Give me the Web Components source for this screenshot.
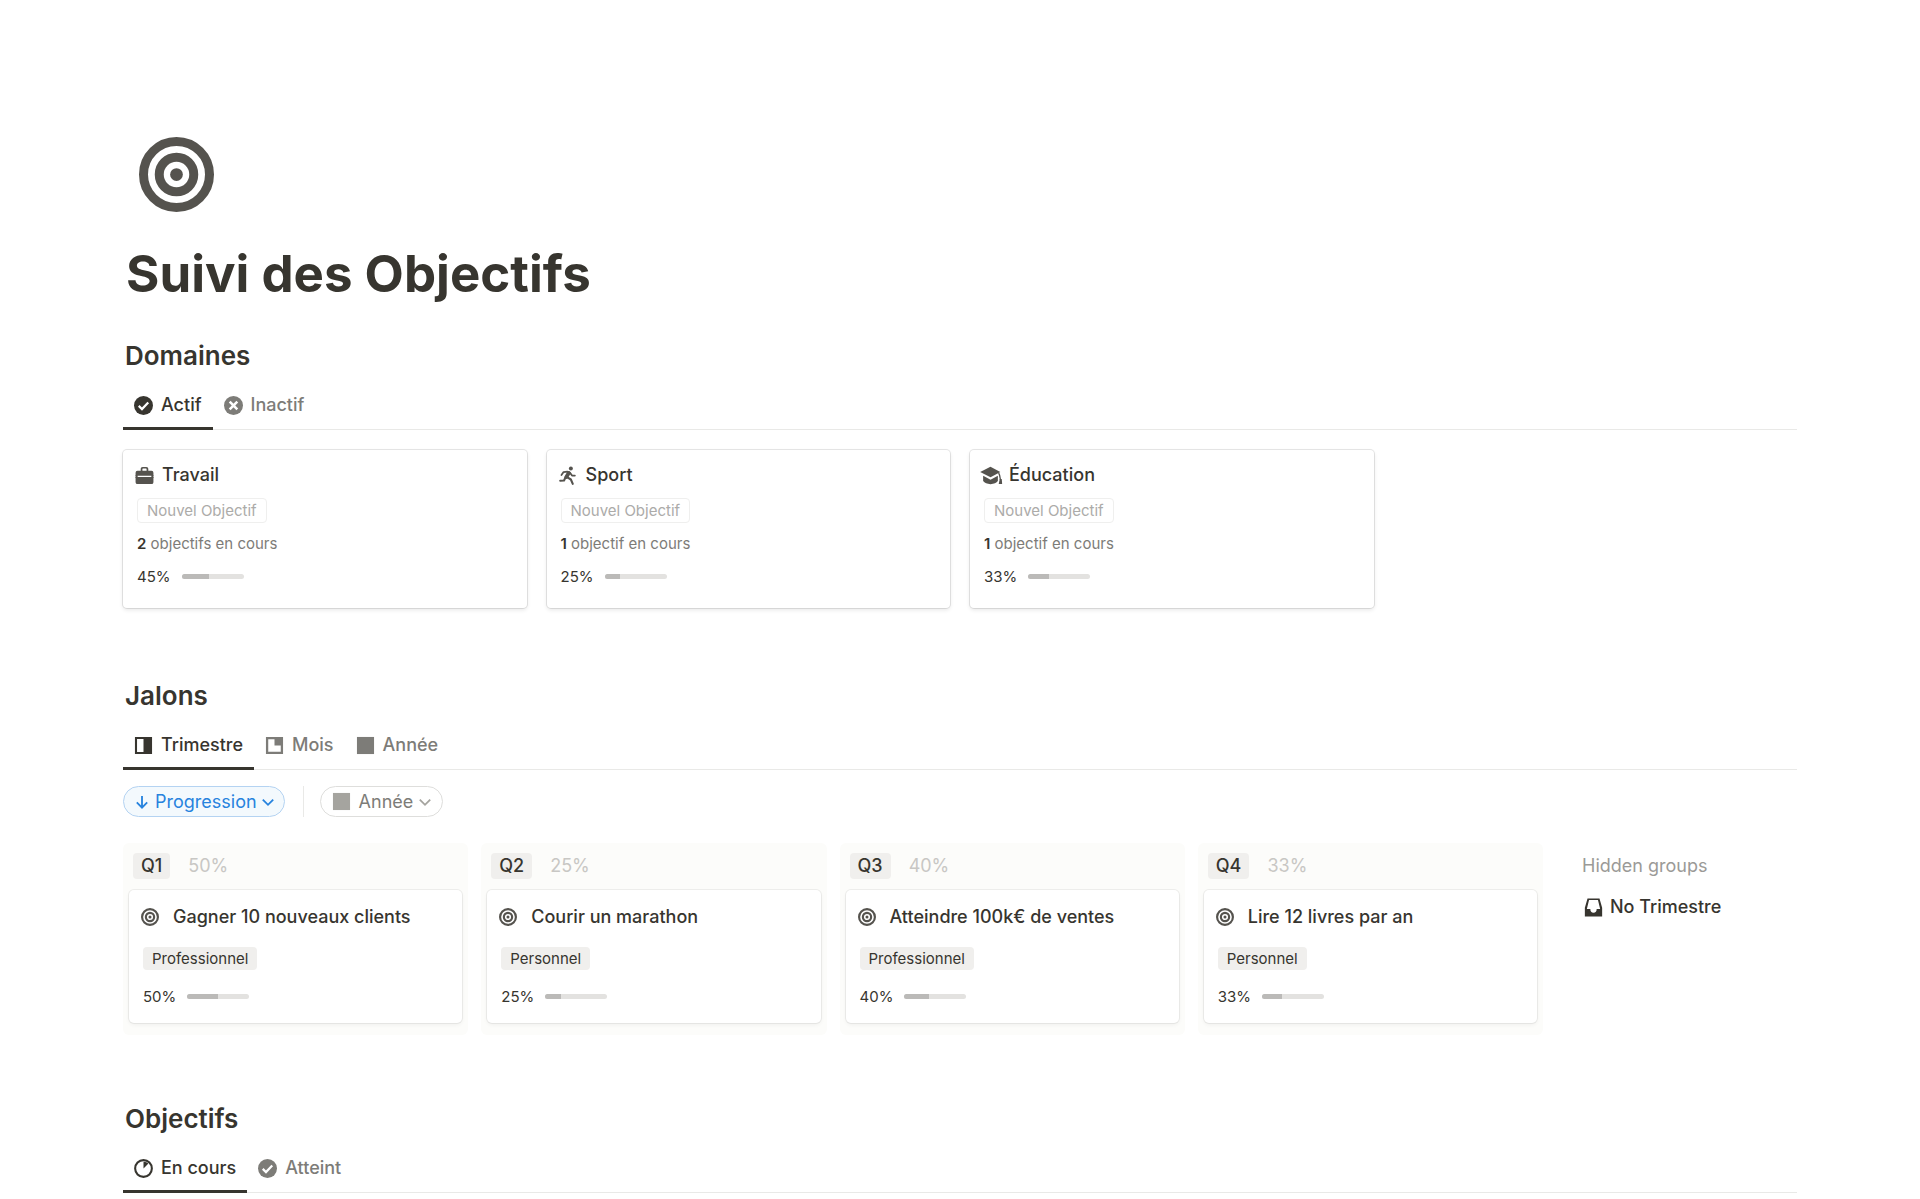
<!DOCTYPE html>
<html lang="fr">
<head>
<meta charset="utf-8">
<meta name="viewport" content="width=device-width, initial-scale=1">
<title>Suivi des Objectifs</title>
<style>
  :root {
    --color-text: #37352f;
    --color-muted: #7d7c78;
    --color-faint: #acaba9;
    --color-icon: #55534e;
    --color-line: #e9e9e7;
    --color-tag: #f0efed;
    --color-accent: #2783de;
    --font-size-body: 18px;
    --font-size-small: 15px;
    --line-body: 26px;
    --line-small: 23px;
  }

  body {
    margin: 0;
    background: #fff;
    color: var(--color-text);
    font-family: Inter, "Liberation Sans", sans-serif;
    font-size: var(--font-size-body);
    line-height: var(--line-body);
  }
</style>
</head>
<body>
<goal-page heading="Suivi des Objectifs">
  <page-section heading="Domaines">
    <view-tabs slot="tabs">
      <view-tab icon="check" selected>Actif</view-tab>
      <view-tab icon="cross">Inactif</view-tab>
    </view-tabs>
    <card-gallery>
      <domain-card icon="briefcase" name="Travail" count="2" value="45">objectifs en cours</domain-card>
      <domain-card icon="runner" name="Sport" count="1" value="25">objectif en cours</domain-card>
      <domain-card icon="cap" name="Éducation" count="1" value="33">objectif en cours</domain-card>
    </card-gallery>
  </page-section>

  <page-section heading="Jalons">
    <view-tabs slot="tabs">
      <view-tab icon="half" selected>Trimestre</view-tab>
      <view-tab icon="quarter">Mois</view-tab>
      <view-tab icon="square">Année</view-tab>
    </view-tabs>
    <filter-bar>
      <filter-pill icon="arrow" active>Progression</filter-pill>
      <filter-pill icon="square" slot="filters">Année</filter-pill>
    </filter-bar>
    <goal-board>
      <board-column name="Q1" total="50%">
        <milestone-card tag="Professionnel" value="50">Gagner 10 nouveaux clients</milestone-card>
      </board-column>
      <board-column name="Q2" total="25%">
        <milestone-card tag="Personnel" value="25">Courir un marathon</milestone-card>
      </board-column>
      <board-column name="Q3" total="40%">
        <milestone-card tag="Professionnel" value="40">Atteindre 100k€ de ventes</milestone-card>
      </board-column>
      <board-column name="Q4" total="33%">
        <milestone-card tag="Personnel" value="33">Lire 12 livres par an</milestone-card>
      </board-column>
      <hidden-groups slot="hidden" heading="Hidden groups">No Trimestre</hidden-groups>
    </goal-board>
  </page-section>

  <page-section heading="Objectifs">
    <view-tabs slot="tabs">
      <view-tab icon="clock" selected>En cours</view-tab>
      <view-tab icon="check">Atteint</view-tab>
    </view-tabs>
  </page-section>
</goal-page>

<script>
const esc = (s) => { const d = document.createElement('div'); d.textContent = s; return d.innerHTML; };

// All icons share a 20 x 20 grid.
const ICONS = {
  target: `<g fill="none" stroke="currentColor" stroke-width="2.4"><circle cx="10" cy="10" r="8.8"/><circle cx="10" cy="10" r="4.6"/></g><circle cx="10" cy="10" r="1.7" fill="currentColor"/>`,
  check: `<circle cx="10" cy="10" r="10" fill="currentColor"/><path d="M5 10.4l3.4 3.4 6.6-7" fill="none" stroke="#fff" stroke-width="2.3"/>`,
  cross: `<circle cx="10" cy="10" r="10" fill="currentColor"/><path d="M6 6l8 8M14 6l-8 8" fill="none" stroke="#fff" stroke-width="2.7"/>`,
  briefcase: `<path d="M6 5V3.2C6 1.9 6.8 1 8.1 1h3.8C13.2 1 14 1.9 14 3.2V5h3.4a2 2 0 0 1 2 2v3.3H.6V7a2 2 0 0 1 2-2zm1.8 0h4.4V3.3a.6.6 0 0 0-.6-.6H8.4a.6.6 0 0 0-.6.6zM.6 11.6h18.8V17a2 2 0 0 1-2 2H2.6a2 2 0 0 1-2-2z" fill="currentColor" fill-rule="evenodd"/><path d="M.6 9.5h2.2v3H.6zM17.2 9.5h2.2v3h-2.2z" fill="currentColor"/>`,
  runner: `<circle cx="12.5" cy="2.6" r="2.1" fill="currentColor"/><g fill="none" stroke="currentColor" stroke-linecap="round" stroke-linejoin="round"><path d="M2.6 9.4l2.2-3 3.8-.5 3 1.2 2.1 3h3" stroke-width="1.9"/><path d="M10.3 7.3L7.7 11.5" stroke-width="4"/><path d="M8.5 11.8l4 2.4 2 4.6M7 11.6l-1.7 3.7-4 .2" stroke-width="2.2"/></g>`,
  cap: `<path d="M-1.9 6.2L8.9.8l10.4 5.4-10.3 5.6z" fill="currentColor"/><path d="M1.2 10.2l7.8 4.2 7.7-4.2v5.7c-1.4 2-4.1 3.2-7.7 3.2s-6.3-1.2-7.8-3.2z" fill="currentColor"/><path d="M17.5 7.2c1.3 1.8 1.5 5 1.9 7.4" fill="none" stroke="currentColor" stroke-width="1.4"/><path d="M18.7 13.8h2.1l.4 5.2h-3.6z" fill="currentColor"/>`,
  half: `<path d="M1 1h18v18H1zM3.2 3.2v13.6H10V3.2z" fill="currentColor" fill-rule="evenodd"/>`,
  quarter: `<path d="M1 1h18v18H1zM3.4 3.4v13.2h13.2V10H10V3.4z" fill="currentColor" fill-rule="evenodd"/>`,
  square: `<path d="M1 1h18v18H1z" fill="currentColor"/>`,
  clock: `<circle cx="10" cy="10" r="8.8" fill="none" stroke="currentColor" stroke-width="2.2"/><path d="M10 3v7l5.2-5.2A7.3 7.3 0 0 0 10 3z" fill="currentColor"/>`,
  inbox: `<path d="M3.7.6h12.6l2.8 9.6v9.2H.9v-9.2zM5.3 2.2L3 11.500h3.7v.7a3.3 3.3 0 0 0 6.600 0v-.7H17L14.7 2.2z" fill="currentColor" fill-rule="evenodd"/>`,
  arrow: `<path d="M10 2.5V17M3.5 10.5L10 17l6.5-6.5" fill="none" stroke="currentColor" stroke-width="2.3"/>`,
  chevron: `<path d="M3.5 7l6.5 6.5L16.5 7" fill="none" stroke="currentColor" stroke-width="2.3"/>`,
};

const icon = (name) => `<svg class="icon" viewBox="0 0 20 20" aria-hidden="true">${ICONS[name] || ''}</svg>`;

const ICON_STYLES = `
  .icon {
    display: block;
    flex-shrink: 0;
    width: 19px;
    height: 19px;
    overflow: visible;
  }
`;

class BaseElement extends HTMLElement {
  constructor() {
    super();
    this.attachShadow({ mode: 'open' });
  }

  connectedCallback() {
    this.shadowRoot.innerHTML = `<style>${ICON_STYLES}${this.styles()}</style>${this.markup()}`;
  }

  attr(name) {
    return esc(this.getAttribute(name) || '');
  }

  styles() { return ''; }
  markup() { return '<slot></slot>'; }
}

class GoalPage extends BaseElement {
  styles() {
    return `
      :host {
        display: block;
        padding: 137px 123px 0;
      }

      .icon {
        width: 75px;
        height: 75px;
        margin-left: 16px;
        color: var(--color-icon);
      }

      h1 {
        margin: 30px 3px 0;
        font-size: 51px;
        line-height: 64px;
        font-weight: 700;
      }

      main {
        display: flex;
        flex-direction: column;
        gap: 67px;
        margin-top: 33px;
      }
    `;
  }

  markup() {
    return `
      <header>${icon('target')}<h1>${this.attr('heading')}</h1></header>
      <main><slot></slot></main>
    `;
  }
}

class PageSection extends BaseElement {
  styles() {
    return `
      :host {
        display: block;
      }

      h2 {
        margin: 0 2px 6px;
        font-size: 26px;
        line-height: 34px;
        font-weight: 600;
      }
    `;
  }

  markup() {
    return `<section><h2>${this.attr('heading')}</h2><slot name="tabs"></slot><slot></slot></section>`;
  }
}

class ViewTabs extends BaseElement {
  styles() {
    return `
      :host {
        display: flex;
        box-shadow: inset 0 -1px var(--color-line);
      }
    `;
  }

  connectedCallback() {
    super.connectedCallback();
    this.addEventListener('tab-select', (e) => {
      this.querySelectorAll('view-tab').forEach(tab => tab.toggleAttribute('selected', tab === e.target));
    });
  }
}

class ViewTab extends BaseElement {
  static observedAttributes = ['selected'];

  styles() {
    return `
      :host {
        display: block;
      }

      button {
        display: flex;
        align-items: center;
        gap: 8px;
        padding: 13px 11px 9px;
        border: 0;
        border-bottom: 3px solid transparent;
        background: none;
        color: var(--color-muted);
        font: inherit;
        font-weight: 500;
        cursor: pointer;
      }

      :host([selected]) button {
        border-bottom-color: var(--color-text);
        color: var(--color-text);
      }
    `;
  }

  markup() {
    return `<button type="button" aria-pressed="${this.hasAttribute('selected')}">${icon(this.getAttribute('icon'))}<slot></slot></button>`;
  }

  connectedCallback() {
    super.connectedCallback();
    this.shadowRoot.querySelector('button').addEventListener('click', () => {
      this.dispatchEvent(new CustomEvent('tab-select', { bubbles: true }));
    });
  }

  attributeChangedCallback() {
    const button = this.shadowRoot.querySelector('button');
    if (button) button.setAttribute('aria-pressed', this.hasAttribute('selected'));
  }
}

class CardGallery extends BaseElement {
  styles() {
    return `
      :host {
        display: grid;
        grid-template-columns: repeat(auto-fill, minmax(330px, 1fr));
        gap: 20px;
        padding: 20px 0 4px;
      }
    `;
  }
}

class ProgressLine extends BaseElement {
  styles() {
    return `
      :host {
        display: flex;
        align-items: center;
        gap: 11px;
        font-size: var(--font-size-small);
        line-height: var(--line-small);
      }

      .track {
        width: 62px;
        height: 5px;
        border-radius: 3px;
        background: #e3e2e0;
        overflow: hidden;
      }

      .fill {
        height: 100%;
        background: #bbbab8;
      }
    `;
  }

  markup() {
    const value = parseInt(this.getAttribute('value'), 10) || 0;
    return `
      <span>${value}%</span>
      <div class="track" role="progressbar" aria-valuenow="${value}" aria-valuemin="0" aria-valuemax="100">
        <div class="fill" style="width: ${value}%"></div>
      </div>
    `;
  }
}

class DomainCard extends BaseElement {
  styles() {
    return `
      :host {
        display: block;
        border-radius: 4px;
        background: #fff;
        box-shadow: 0 0 0 1px rgba(15, 15, 15, 0.1), 0 2px 4px rgba(15, 15, 15, 0.1);
      }

      article {
        padding: 12px 14px 20px;
      }

      h3 {
        display: flex;
        align-items: center;
        gap: 8px;
        margin: 0 -2px 10px;
        font-size: var(--font-size-body);
        font-weight: 500;
      }

      h3 .icon {
        color: var(--color-icon);
      }

      button {
        display: block;
        padding: 0 9px;
        border: 1px solid #efefee;
        border-radius: 4px;
        background: none;
        color: var(--color-faint);
        font: inherit;
        font-size: var(--font-size-small);
        line-height: var(--line-small);
        cursor: pointer;
      }

      p {
        margin: 9px 0 10px;
        color: var(--color-muted);
        font-size: var(--font-size-small);
        line-height: var(--line-small);
      }

      strong {
        color: var(--color-text);
        font-weight: 600;
      }
    `;
  }

  markup() {
    return `
      <article>
        <h3>${icon(this.getAttribute('icon'))}${this.attr('name')}</h3>
        <button type="button">Nouvel Objectif</button>
        <p><strong>${this.attr('count')}</strong> <slot></slot></p>
        <progress-line value="${this.attr('value')}"></progress-line>
      </article>
    `;
  }
}

class FilterBar extends BaseElement {
  styles() {
    return `
      :host {
        display: flex;
        align-items: stretch;
        padding: 16px 0 26px;
      }

      .divider {
        width: 1px;
        margin: 0 16px 0 18px;
        background: var(--color-line);
      }
    `;
  }

  markup() {
    return `<slot></slot><div class="divider"></div><slot name="filters"></slot>`;
  }
}

class FilterPill extends BaseElement {
  styles() {
    return `
      :host {
        display: block;
      }

      button {
        display: flex;
        align-items: center;
        gap: 8px;
        height: 31px;
        padding: 0 9px 0 11px;
        border: 1px solid #dededc;
        border-radius: 16px;
        background: none;
        color: var(--color-muted);
        font: inherit;
        cursor: pointer;
      }

      .icon {
        color: #a5a49f;
      }

      .icon:last-child {
        width: 16px;
        height: 16px;
        margin-left: -4px;
      }

      :host([active]) button {
        gap: 5px;
        padding: 0 8px 0 10px;
        border-color: #b4d3f2;
        background: #f3f9fd;
        color: var(--color-accent);
      }

      :host([active]) .icon {
        width: 16px;
        height: 16px;
        color: inherit;
      }

      :host([active]) .icon:last-child {
        margin-left: -2px;
      }
    `;
  }

  markup() {
    return `<button type="button">${icon(this.getAttribute('icon'))}<slot></slot>${icon('chevron')}</button>`;
  }
}

class GoalBoard extends BaseElement {
  styles() {
    return `
      :host {
        display: flex;
        align-items: flex-start;
        gap: 39px;
      }

      .columns {
        display: grid;
        flex: 1;
        grid-template-columns: repeat(4, 1fr);
        gap: 13px;
      }
    `;
  }

  markup() {
    return `<div class="columns"><slot></slot></div><slot name="hidden"></slot>`;
  }
}

class BoardColumn extends BaseElement {
  styles() {
    return `
      :host {
        display: block;
        padding: 10px 6px 12px;
        border-radius: 6px;
        background: #fcfcfa;
      }

      header {
        display: flex;
        align-items: center;
        gap: 18px;
        margin: 0 4px 11px;
        color: #c8c7c4;
      }

      h3 {
        margin: 0;
        padding: 0 8px;
        border-radius: 4px;
        background: var(--color-tag);
        color: var(--color-text);
        font-size: var(--font-size-body);
        font-weight: 500;
      }
    `;
  }

  markup() {
    return `
      <header><h3>${this.attr('name')}</h3><span>${this.attr('total')}</span></header>
      <slot></slot>
    `;
  }
}

class MilestoneCard extends BaseElement {
  styles() {
    return `
      :host {
        display: block;
        border-radius: 5px;
        background: #fff;
        box-shadow: 0 0 0 1px rgba(15, 15, 15, 0.06), 0 2px 4px rgba(15, 15, 15, 0.05);
      }

      article {
        padding: 14px 14px 15px;
      }

      h4 {
        display: flex;
        align-items: center;
        gap: 14px;
        margin: 0 -2px 17px;
        font-size: var(--font-size-body);
        font-weight: 500;
      }

      .icon {
        width: 18px;
        height: 18px;
        color: var(--color-icon);
      }

      .tag {
        display: block;
        width: fit-content;
        margin-bottom: 15px;
        padding: 0 9px;
        border-radius: 4px;
        background: var(--color-tag);
        font-size: var(--font-size-small);
        line-height: var(--line-small);
      }
    `;
  }

  markup() {
    return `
      <article>
        <h4>${icon('target')}<slot></slot></h4>
        <span class="tag">${this.attr('tag')}</span>
        <progress-line value="${this.attr('value')}"></progress-line>
      </article>
    `;
  }
}

class HiddenGroups extends BaseElement {
  styles() {
    return `
      :host {
        display: block;
        width: 215px;
        padding-top: 10px;
      }

      h3 {
        margin: 0 0 15px;
        color: #9b9a97;
        font-size: var(--font-size-body);
        font-weight: 400;
      }

      button {
        display: flex;
        align-items: center;
        gap: 7px;
        padding: 0 2px;
        border: 0;
        background: none;
        color: inherit;
        font: inherit;
        font-weight: 500;
        cursor: pointer;
      }
    `;
  }

  markup() {
    return `<aside><h3>${this.attr('heading')}</h3><button type="button">${icon('inbox')}<slot></slot></button></aside>`;
  }
}

customElements.define('goal-page', GoalPage);
customElements.define('page-section', PageSection);
customElements.define('view-tabs', ViewTabs);
customElements.define('view-tab', ViewTab);
customElements.define('card-gallery', CardGallery);
customElements.define('progress-line', ProgressLine);
customElements.define('domain-card', DomainCard);
customElements.define('filter-bar', FilterBar);
customElements.define('filter-pill', FilterPill);
customElements.define('goal-board', GoalBoard);
customElements.define('board-column', BoardColumn);
customElements.define('milestone-card', MilestoneCard);
customElements.define('hidden-groups', HiddenGroups);
</script>
</body>
</html>
